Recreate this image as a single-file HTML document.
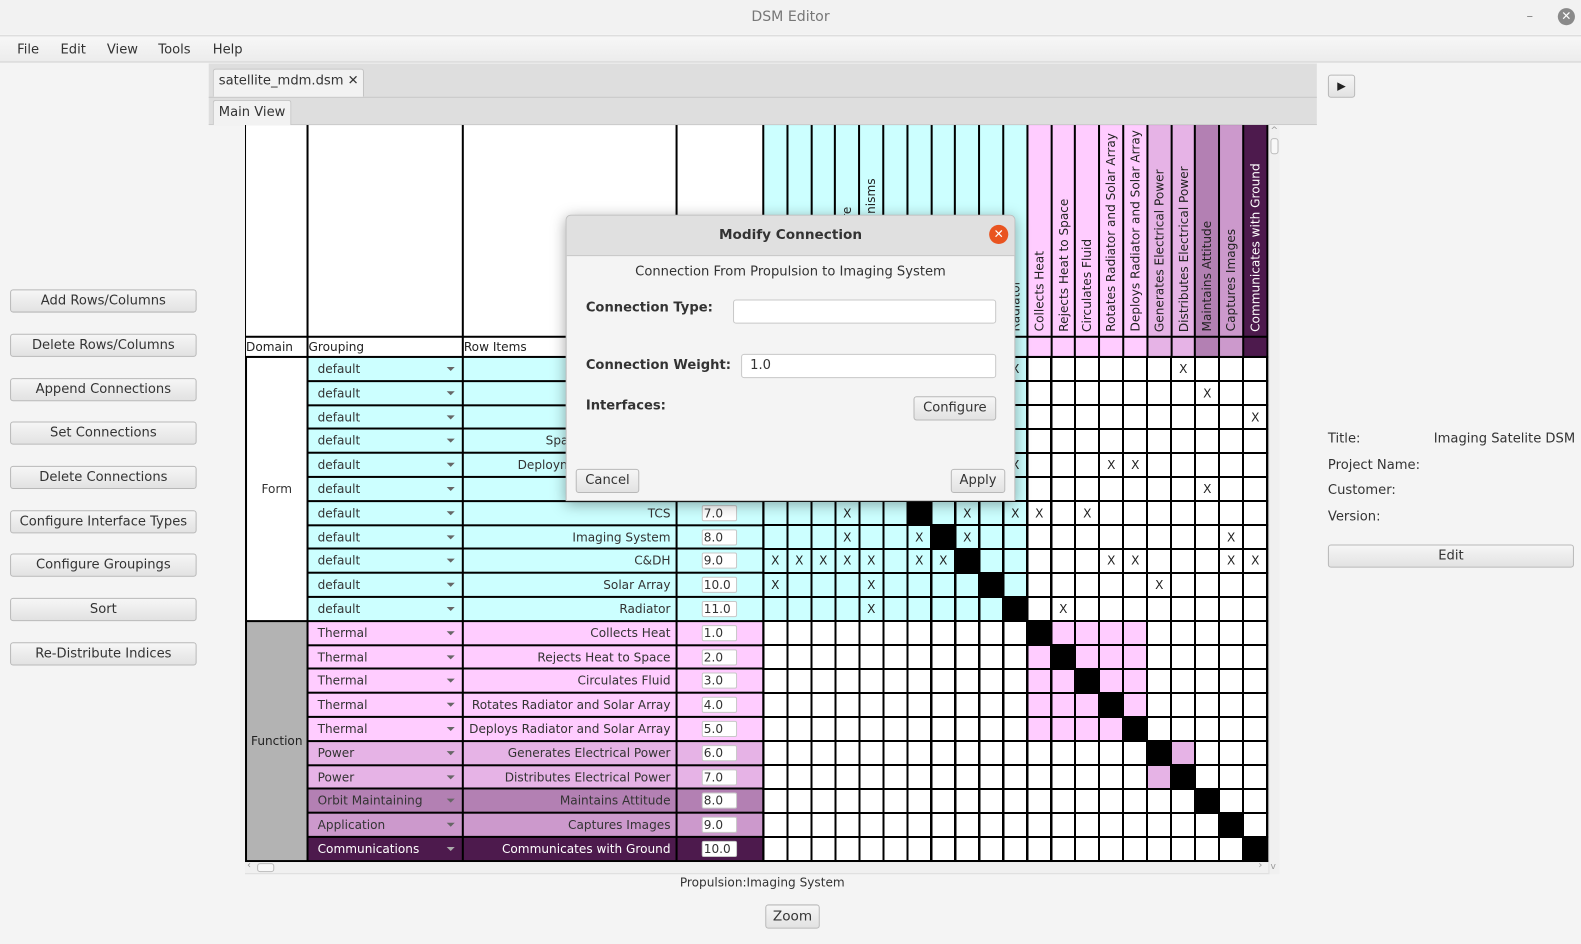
<!DOCTYPE html>
<html><head><meta charset="utf-8">
<style>
html,body{margin:0;padding:0;width:1581px;height:944px;overflow:hidden;background:#f4f4f4}
#w{position:relative;width:1568px;height:936px;transform:scale(1.00829);transform-origin:0 0;font-family:"DejaVu Sans","Liberation Sans",sans-serif;font-size:13px;color:#333;overflow:hidden;background:#f4f4f4}
.a{position:absolute;white-space:nowrap}
.btn{position:absolute;background:linear-gradient(#f6f6f6,#e2e2e2);border:1px solid #b8b8b8;border-radius:3px;box-sizing:border-box;text-align:center;color:#333;font-size:13px;white-space:nowrap}
.row{position:absolute;left:0;top:calc(355px + 23.8px*var(--r));height:21.8px;width:0;font-size:12px}
.row>div{position:absolute;top:0;height:21.8px;line-height:23px;background:var(--bg);box-sizing:border-box;color:var(--fg,#333);white-space:nowrap;overflow:hidden}
.g{left:306px;width:152px;padding-left:9px}
.g b{position:absolute;left:137px;top:9px;width:0;height:0;border-left:4px solid transparent;border-right:4px solid transparent;border-top:4px solid #666}
.n{left:460px;width:210px;text-align:right;padding-right:5px}
.i{left:672px;width:84px}
.i span{position:absolute;left:24px;top:3px;width:35px;height:16px;background:#fff;border:1px solid #c8c8c8;border-radius:2px;box-sizing:border-box;line-height:15px;padding-left:1px;color:#333}
.hc{position:absolute;top:124px;height:209px;width:21.8px;left:calc(758px + 23.8px*var(--c));background:var(--bg);overflow:hidden}
.hc span{position:absolute;bottom:4px;left:4px;writing-mode:vertical-rl;transform:rotate(180deg);white-space:nowrap;color:var(--fg,#222);font-size:12px}
.hl{position:absolute;top:335px;height:17.8px;width:21.8px;left:calc(758px + 23.8px*var(--c));background:var(--bg)}
.d{position:absolute;width:23.8px;height:23.8px;background:#000;left:calc(757px + 23.8px*var(--c));top:calc(354px + 23.8px*var(--c))}
.x{position:absolute;width:23.8px;height:23.8px;line-height:25px;text-align:center;font-size:12px;color:#222;left:calc(757px + 23.8px*var(--c));top:calc(354px + 23.8px*var(--r))}
</style></head><body><div id="w">

<div class="a" style="left:0;top:0;width:1568px;height:34px;background:#f2f2f2"></div>
<div class="a" style="left:0;top:9px;width:1568px;text-align:center;color:#777;font-size:14px">DSM Editor</div>
<div class="a" style="left:1514px;top:9px;color:#888;font-size:13px">–</div>
<div class="a" style="left:1545px;top:8px;width:17px;height:17px;border-radius:50%;background:#8a8a8a;color:#fff;text-align:center;line-height:17px;font-size:12px">✕</div>
<div class="a" style="left:0;top:35px;width:1568px;height:27px;background:linear-gradient(#f7f7f7,#ececec);border-top:1px solid #d4d4d4;border-bottom:1px solid #d0d0d0;box-sizing:border-box"></div>
<div class="a" style="left:17px;top:42px">File</div>
<div class="a" style="left:60px;top:42px">Edit</div>
<div class="a" style="left:106px;top:42px">View</div>
<div class="a" style="left:157px;top:42px">Tools</div>
<div class="a" style="left:211px;top:42px">Help</div>

<div class="a" style="left:207px;top:63px;width:1099px;height:61px;background:#dedede;border-bottom:1px solid #ccc;box-sizing:border-box"></div>
<div class="a" style="left:207px;top:96px;width:1099px;height:1px;background:#c8c8c8"></div>
<div class="a" style="left:211px;top:68px;width:150px;height:28px;background:#f2f2f2;border:1px solid #c4c4c4;border-bottom:none;border-radius:3px 3px 0 0;box-sizing:border-box;padding:4px 0 0 5px;font-size:13px">satellite_mdm.dsm ✕</div>
<div class="a" style="left:211px;top:99px;width:78px;height:25px;background:#f2f2f2;border:1px solid #c4c4c4;border-bottom:none;border-radius:3px 3px 0 0;box-sizing:border-box;padding:4px 0 0 5px;font-size:13px">Main View</div>
<div class="btn" style="left:1317px;top:74px;width:27px;height:23px;line-height:21px;font-size:11px;color:#222">▶</div>

<div class="btn" style="left:10px;top:287px;width:185px;height:23px;line-height:21px">Add Rows/Columns</div>
<div class="btn" style="left:10px;top:331px;width:185px;height:23px;line-height:21px">Delete Rows/Columns</div>
<div class="btn" style="left:10px;top:375px;width:185px;height:23px;line-height:21px">Append Connections</div>
<div class="btn" style="left:10px;top:418px;width:185px;height:23px;line-height:21px">Set Connections</div>
<div class="btn" style="left:10px;top:462px;width:185px;height:23px;line-height:21px">Delete Connections</div>
<div class="btn" style="left:10px;top:506px;width:185px;height:23px;line-height:21px">Configure Interface Types</div>
<div class="btn" style="left:10px;top:549px;width:185px;height:23px;line-height:21px">Configure Groupings</div>
<div class="btn" style="left:10px;top:593px;width:185px;height:23px;line-height:21px">Sort</div>
<div class="btn" style="left:10px;top:637px;width:185px;height:23px;line-height:21px">Re-Distribute Indices</div>

<div class="a" style="left:1317px;top:428px">Title:</div>
<div class="a" style="left:1422px;top:428px">Imaging Satelite DSM</div>
<div class="a" style="left:1317px;top:454px">Project Name:</div>
<div class="a" style="left:1317px;top:479px">Customer:</div>
<div class="a" style="left:1317px;top:505px">Version:</div>
<div class="btn" style="left:1317px;top:540px;width:244px;height:23px;line-height:21px">Edit</div>

<div class="a" style="left:243px;top:124px;width:1015px;height:731px;background:#000"></div>
<div class="a" style="left:244px;top:124px;width:60px;height:209px;background:#fff"></div>
<div class="a" style="left:306px;top:124px;width:152px;height:209px;background:#fff"></div>
<div class="a" style="left:460px;top:124px;width:210px;height:209px;background:#fff"></div>
<div class="a" style="left:672px;top:124px;width:84px;height:209px;background:#fff"></div>
<div class="a" style="left:244px;top:335px;width:60px;height:17.8px;background:#fff;line-height:19px;font-size:12px;color:#222">Domain</div>
<div class="a" style="left:306px;top:335px;width:152px;height:17.8px;background:#fff;line-height:19px;font-size:12px;color:#222">Grouping</div>
<div class="a" style="left:460px;top:335px;width:210px;height:17.8px;background:#fff;line-height:19px;font-size:12px;color:#222">Row Items</div>
<div class="a" style="left:672px;top:335px;width:84px;height:17.8px;background:#fff"></div>

<div class="hc" style="--c:0;--bg:#ccffff"><span>Propulsion</span></div>
<div class="hc" style="--c:1;--bg:#ccffff"><span>ADCS</span></div>
<div class="hc" style="--c:2;--bg:#ccffff"><span>Comms</span></div>
<div class="hc" style="--c:3;--bg:#ccffff"><span>Spacecraft Structure</span></div>
<div class="hc" style="--c:4;--bg:#ccffff"><span>Deployment Mechanisms</span></div>
<div class="hc" style="--c:5;--bg:#ccffff"><span>EPS</span></div>
<div class="hc" style="--c:6;--bg:#ccffff"><span>TCS</span></div>
<div class="hc" style="--c:7;--bg:#ccffff"><span>Imaging System</span></div>
<div class="hc" style="--c:8;--bg:#ccffff"><span>C&amp;DH</span></div>
<div class="hc" style="--c:9;--bg:#ccffff"><span>Solar Array</span></div>
<div class="hc" style="--c:10;--bg:#ccffff"><span>Radiator</span></div>
<div class="hc" style="--c:11;--bg:#ffccff"><span>Collects Heat</span></div>
<div class="hc" style="--c:12;--bg:#ffccff"><span>Rejects Heat to Space</span></div>
<div class="hc" style="--c:13;--bg:#ffccff"><span>Circulates Fluid</span></div>
<div class="hc" style="--c:14;--bg:#ffccff"><span>Rotates Radiator and Solar Array</span></div>
<div class="hc" style="--c:15;--bg:#ffccff"><span>Deploys Radiator and Solar Array</span></div>
<div class="hc" style="--c:16;--bg:#e6b3e6"><span>Generates Electrical Power</span></div>
<div class="hc" style="--c:17;--bg:#e6b3e6"><span>Distributes Electrical Power</span></div>
<div class="hc" style="--c:18;--bg:#b380b3"><span>Maintains Attitude</span></div>
<div class="hc" style="--c:19;--bg:#cc99cc"><span>Captures Images</span></div>
<div class="hc" style="--c:20;--bg:#4d1a4d;--fg:#fff"><span>Communicates with Ground</span></div>
<div class="hl" style="--c:0;--bg:#ccffff"></div><div class="hl" style="--c:1;--bg:#ccffff"></div><div class="hl" style="--c:2;--bg:#ccffff"></div><div class="hl" style="--c:3;--bg:#ccffff"></div><div class="hl" style="--c:4;--bg:#ccffff"></div><div class="hl" style="--c:5;--bg:#ccffff"></div><div class="hl" style="--c:6;--bg:#ccffff"></div><div class="hl" style="--c:7;--bg:#ccffff"></div><div class="hl" style="--c:8;--bg:#ccffff"></div><div class="hl" style="--c:9;--bg:#ccffff"></div><div class="hl" style="--c:10;--bg:#ccffff"></div>
<div class="hl" style="--c:11;--bg:#ffccff"></div><div class="hl" style="--c:12;--bg:#ffccff"></div><div class="hl" style="--c:13;--bg:#ffccff"></div><div class="hl" style="--c:14;--bg:#ffccff"></div><div class="hl" style="--c:15;--bg:#ffccff"></div>
<div class="hl" style="--c:16;--bg:#e6b3e6"></div><div class="hl" style="--c:17;--bg:#e6b3e6"></div><div class="hl" style="--c:18;--bg:#b380b3"></div><div class="hl" style="--c:19;--bg:#cc99cc"></div><div class="hl" style="--c:20;--bg:#4d1a4d"></div>

<div class="a" style="left:245px;top:355px;width:59px;height:259.8px;background:#fff;text-align:center;line-height:261px;color:#333;font-size:12px">Form</div>
<div class="a" style="left:245px;top:616.8px;width:59px;height:236px;background:#b3b3b3;text-align:center;line-height:236px;color:#222;font-size:12px">Function</div>

<div class="row" style="--r:0;--bg:#ccffff"><div class="g">default<b></b></div><div class="n">Propulsion</div><div class="i"><span>1.0</span></div></div>
<div class="row" style="--r:1;--bg:#ccffff"><div class="g">default<b></b></div><div class="n">ADCS</div><div class="i"><span>2.0</span></div></div>
<div class="row" style="--r:2;--bg:#ccffff"><div class="g">default<b></b></div><div class="n">Comms</div><div class="i"><span>3.0</span></div></div>
<div class="row" style="--r:3;--bg:#ccffff"><div class="g">default<b></b></div><div class="n">Spacecraft Structure</div><div class="i"><span>4.0</span></div></div>
<div class="row" style="--r:4;--bg:#ccffff"><div class="g">default<b></b></div><div class="n">Deployment Mechanisms</div><div class="i"><span>5.0</span></div></div>
<div class="row" style="--r:5;--bg:#ccffff"><div class="g">default<b></b></div><div class="n">EPS</div><div class="i"><span>6.0</span></div></div>
<div class="row" style="--r:6;--bg:#ccffff"><div class="g">default<b></b></div><div class="n">TCS</div><div class="i"><span>7.0</span></div></div>
<div class="row" style="--r:7;--bg:#ccffff"><div class="g">default<b></b></div><div class="n">Imaging System</div><div class="i"><span>8.0</span></div></div>
<div class="row" style="--r:8;--bg:#ccffff"><div class="g">default<b></b></div><div class="n">C&amp;DH</div><div class="i"><span>9.0</span></div></div>
<div class="row" style="--r:9;--bg:#ccffff"><div class="g">default<b></b></div><div class="n">Solar Array</div><div class="i"><span>10.0</span></div></div>
<div class="row" style="--r:10;--bg:#ccffff"><div class="g">default<b></b></div><div class="n">Radiator</div><div class="i"><span>11.0</span></div></div>
<div class="row" style="--r:11;--bg:#ffccff"><div class="g">Thermal<b></b></div><div class="n">Collects Heat</div><div class="i"><span>1.0</span></div></div>
<div class="row" style="--r:12;--bg:#ffccff"><div class="g">Thermal<b></b></div><div class="n">Rejects Heat to Space</div><div class="i"><span>2.0</span></div></div>
<div class="row" style="--r:13;--bg:#ffccff"><div class="g">Thermal<b></b></div><div class="n">Circulates Fluid</div><div class="i"><span>3.0</span></div></div>
<div class="row" style="--r:14;--bg:#ffccff"><div class="g">Thermal<b></b></div><div class="n">Rotates Radiator and Solar Array</div><div class="i"><span>4.0</span></div></div>
<div class="row" style="--r:15;--bg:#ffccff"><div class="g">Thermal<b></b></div><div class="n">Deploys Radiator and Solar Array</div><div class="i"><span>5.0</span></div></div>
<div class="row" style="--r:16;--bg:#e6b3e6"><div class="g">Power<b></b></div><div class="n">Generates Electrical Power</div><div class="i"><span>6.0</span></div></div>
<div class="row" style="--r:17;--bg:#e6b3e6"><div class="g">Power<b></b></div><div class="n">Distributes Electrical Power</div><div class="i"><span>7.0</span></div></div>
<div class="row" style="--r:18;--bg:#b380b3"><div class="g">Orbit Maintaining<b></b></div><div class="n">Maintains Attitude</div><div class="i"><span>8.0</span></div></div>
<div class="row" style="--r:19;--bg:#cc99cc"><div class="g">Application<b></b></div><div class="n">Captures Images</div><div class="i"><span>9.0</span></div></div>
<div class="row" style="--r:20;--bg:#4d1a4d;--fg:#fff"><div class="g">Communications<b style="border-top-color:#aaa"></b></div><div class="n">Communicates with Ground</div><div class="i"><span>10.0</span></div></div>

<div class="a" style="left:757px;top:354px;width:499.8px;height:499.8px;background:#fff"></div>
<div class="a" style="left:757px;top:354px;width:261.8px;height:261.8px;background:#ccffff"></div>
<div class="a" style="left:1018.8px;top:615.8px;width:119px;height:119px;background:#ffccff"></div>
<div class="a" style="left:1137.8px;top:734.8px;width:47.6px;height:47.6px;background:#e6b3e6"></div>
<div class="d" style="--c:0"></div><div class="d" style="--c:1"></div><div class="d" style="--c:2"></div><div class="d" style="--c:3"></div><div class="d" style="--c:4"></div><div class="d" style="--c:5"></div><div class="d" style="--c:6"></div><div class="d" style="--c:7"></div><div class="d" style="--c:8"></div><div class="d" style="--c:9"></div><div class="d" style="--c:10"></div><div class="d" style="--c:11"></div><div class="d" style="--c:12"></div><div class="d" style="--c:13"></div><div class="d" style="--c:14"></div><div class="d" style="--c:15"></div><div class="d" style="--c:16"></div><div class="d" style="--c:17"></div><div class="d" style="--c:18"></div><div class="d" style="--c:19"></div><div class="d" style="--c:20"></div>
<div class="a" style="left:756px;top:353px;width:502px;height:502px;background:repeating-linear-gradient(90deg,#000 0 2px,transparent 2px 23.8px),repeating-linear-gradient(180deg,#000 0 2px,transparent 2px 23.8px)"></div>
<div class="x" style="--r:0;--c:10">X</div><div class="x" style="--r:0;--c:17">X</div>
<div class="x" style="--r:1;--c:18">X</div>
<div class="x" style="--r:2;--c:20">X</div>
<div class="x" style="--r:4;--c:10">X</div><div class="x" style="--r:4;--c:14">X</div><div class="x" style="--r:4;--c:15">X</div>
<div class="x" style="--r:5;--c:18">X</div>
<div class="x" style="--r:6;--c:3">X</div><div class="x" style="--r:6;--c:8">X</div><div class="x" style="--r:6;--c:10">X</div><div class="x" style="--r:6;--c:11">X</div><div class="x" style="--r:6;--c:13">X</div>
<div class="x" style="--r:7;--c:3">X</div><div class="x" style="--r:7;--c:6">X</div><div class="x" style="--r:7;--c:8">X</div><div class="x" style="--r:7;--c:19">X</div>
<div class="x" style="--r:8;--c:0">X</div><div class="x" style="--r:8;--c:1">X</div><div class="x" style="--r:8;--c:2">X</div><div class="x" style="--r:8;--c:3">X</div><div class="x" style="--r:8;--c:4">X</div><div class="x" style="--r:8;--c:6">X</div><div class="x" style="--r:8;--c:7">X</div><div class="x" style="--r:8;--c:14">X</div><div class="x" style="--r:8;--c:15">X</div><div class="x" style="--r:8;--c:19">X</div><div class="x" style="--r:8;--c:20">X</div>
<div class="x" style="--r:9;--c:0">X</div><div class="x" style="--r:9;--c:4">X</div><div class="x" style="--r:9;--c:16">X</div>
<div class="x" style="--r:10;--c:4">X</div><div class="x" style="--r:10;--c:12">X</div>

<div class="a" style="left:1258px;top:124px;width:11px;height:743px;background:#f0f0f0;border-left:1px solid #ddd;box-sizing:border-box"></div>
<div class="a" style="left:1260px;top:125px;font-size:9px;color:#999">^</div>
<div class="a" style="left:1260px;top:137px;width:8px;height:16px;background:#f8f8f8;border:1px solid #bbb;border-radius:3px;box-sizing:border-box"></div>
<div class="a" style="left:1260px;top:855px;font-size:9px;color:#999">v</div>
<div class="a" style="left:243px;top:855px;width:1015px;height:12px;background:#f0f0f0;border-bottom:1px solid #ddd;box-sizing:border-box"></div>
<div class="a" style="left:245px;top:853px;font-size:10px;color:#999">‹</div>
<div class="a" style="left:255px;top:856px;width:17px;height:9px;background:#f8f8f8;border:1px solid #bbb;border-radius:3px;box-sizing:border-box"></div>
<div class="a" style="left:1248px;top:853px;font-size:10px;color:#999">›</div>

<div class="a" style="left:556px;top:868px;width:400px;text-align:center;font-size:12px">Propulsion:Imaging System</div>
<div class="btn" style="left:759px;top:897px;width:54px;height:24px;line-height:22px;font-size:13.5px">Zoom</div>

<div class="a" style="left:561px;top:213px;width:446px;height:284px;background:#f4f4f4;border:1px solid #bdbdbd;border-radius:5px 5px 0 0;box-sizing:border-box;box-shadow:0 3px 14px rgba(0,0,0,.35);overflow:hidden">
  <div class="a" style="left:0;top:0;width:446px;height:39px;background:#e0e0e0;border-bottom:1px solid #c8c8c8"></div>
  <div class="a" style="left:0;top:11px;width:444px;text-align:center;font-weight:bold;font-size:13.5px;color:#333">Modify Connection</div>
  <div class="a" style="left:419px;top:9px;width:19px;height:19px;border-radius:50%;background:#e95420;color:#fff;text-align:center;line-height:19px;font-size:12px">✕</div>
  <div class="a" style="left:0;top:48px;width:444px;text-align:center;color:#333">Connection From Propulsion to Imaging System</div>
  <div class="a" style="left:19px;top:84px;font-weight:bold;color:#333">Connection Type:</div>
  <div class="a" style="left:165px;top:83px;width:261px;height:24px;background:#fff;border:1px solid #c8c8c8;border-radius:3px;box-sizing:border-box"></div>
  <div class="a" style="left:19px;top:141px;font-weight:bold;color:#333">Connection Weight:</div>
  <div class="a" style="left:173px;top:137px;width:253px;height:24px;background:#fff;border:1px solid #c8c8c8;border-radius:3px;box-sizing:border-box;padding:3px 0 0 8px">1.0</div>
  <div class="a" style="left:19px;top:181px;font-weight:bold;color:#333">Interfaces:</div>
  <div class="btn" style="left:344px;top:179px;width:82px;height:24px;line-height:22px">Configure</div>
  <div class="btn" style="left:9px;top:251px;width:63px;height:24px;line-height:22px">Cancel</div>
  <div class="btn" style="left:381px;top:251px;width:54px;height:24px;line-height:22px">Apply</div>
</div>

</div></body></html>
